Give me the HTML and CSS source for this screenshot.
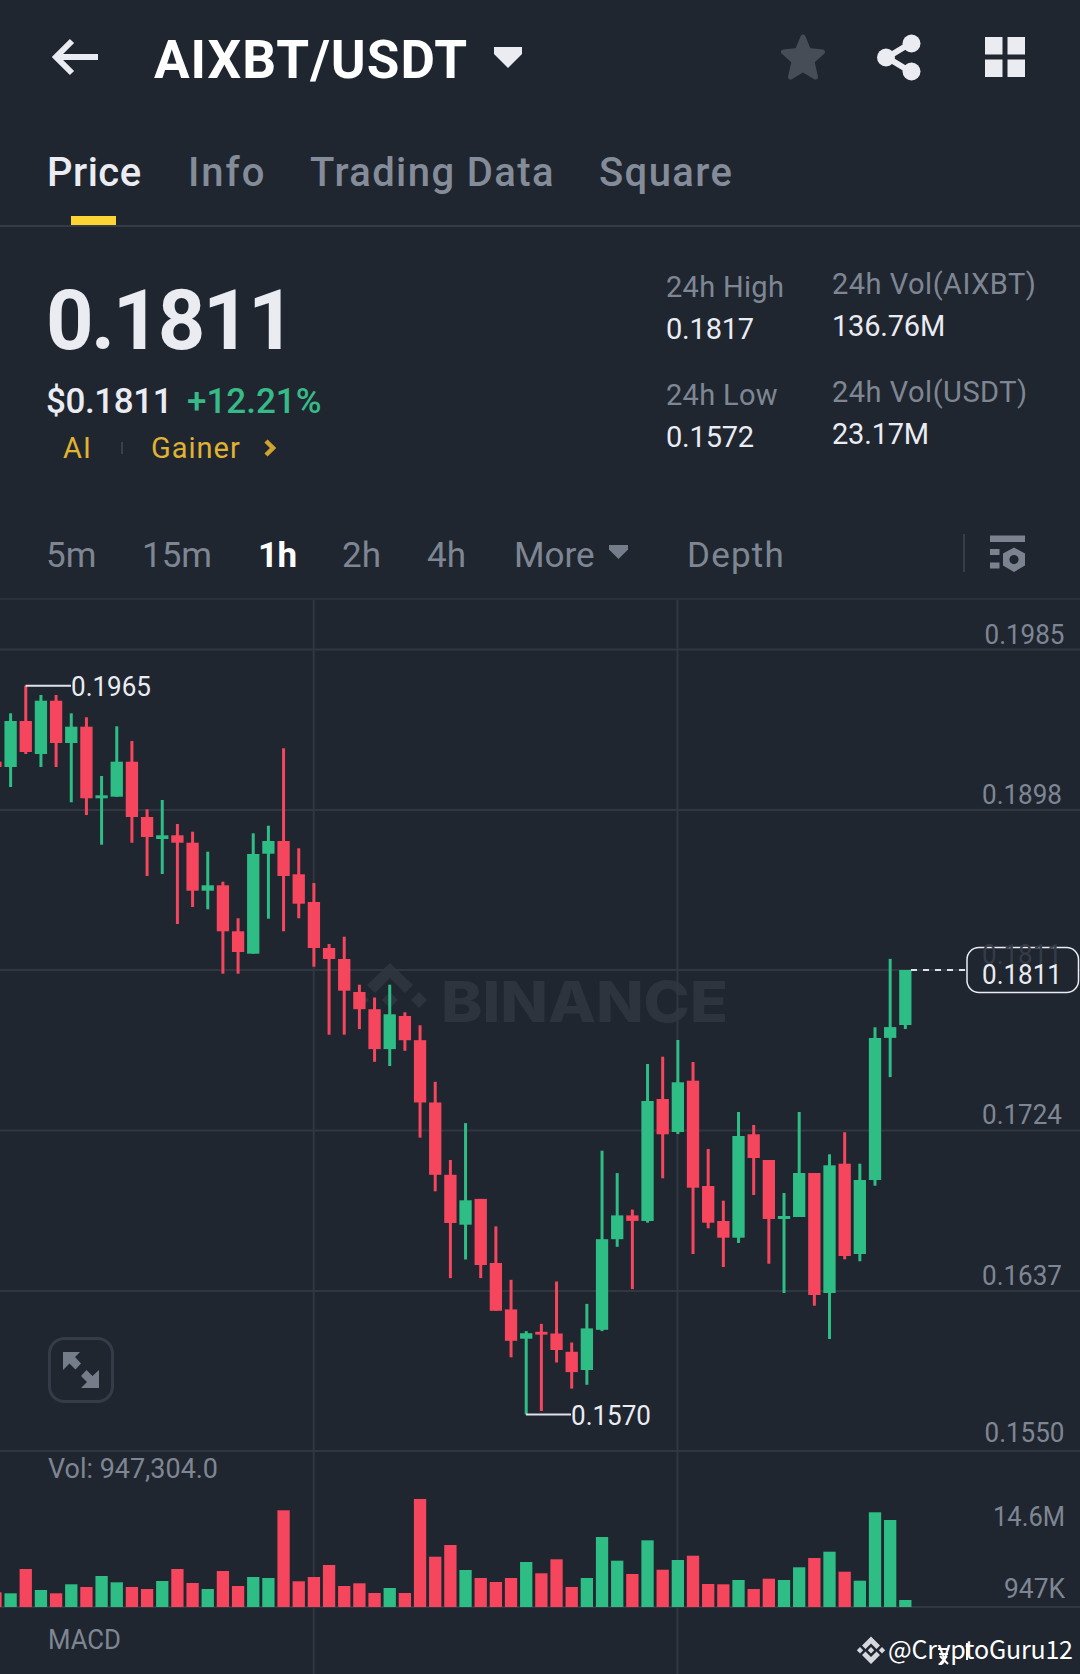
FILE: index.html
```html
<!DOCTYPE html>
<html lang="en">
<head>
    <meta charset="UTF-8">
    <title>AIXBT/USDT</title>
    <meta name="viewport" content="width=device-width, initial-scale=1.0">
    <link rel="stylesheet" href="styles.css">
</head>
<body>
    <header class="header">
        <svg class="back" width="48" height="38" viewBox="0 0 48 38">
            <path d="M3 19H46M20 3L4 19L20 35" fill="none" stroke="#eaecf2" stroke-width="6"/>
        </svg>
        <h1>AIXBT/USDT</h1>
        <svg class="caret" width="28" height="21" viewBox="0 0 28 21">
            <path d="M0 0H28V7L14 21L0 7Z" fill="#eaecf2"/>
        </svg>
        <div class="actions">
            <svg width="46" height="46" viewBox="0 0 46 46">
                <path d="M23 3L28.5 16.5L42.500 18L32 27.500L35.500 43L23 35.500L10.500 43L14 27.500L3.500 18L17.500 16.500Z" fill="#474d57" stroke="#474d57" stroke-width="5" stroke-linejoin="round"/>
            </svg>
            <svg width="44" height="47" viewBox="0 0 44 47">
                <path d="M34 9L10 23.500L34 38" fill="none" stroke="#eaecf2" stroke-width="6"/>
                <circle cx="34.500" cy="9.500" r="9" fill="#eaecf2"/>
                <circle cx="9" cy="23.500" r="9" fill="#eaecf2"/>
                <circle cx="34.500" cy="37.500" r="9" fill="#eaecf2"/>
            </svg>
            <svg width="40" height="40" viewBox="0 0 40 40">
                <path d="M0 0H17.500V17.500H0ZM22.500 0H40V17.500H22.500ZM0 22.500H17.500V40H0ZM22.500 22.500H40V40H22.500Z" fill="#eaecf2"/>
            </svg>
        </div>
    </header>

    <nav class="tabs">
        <a class="tab active">Price</a>
        <a class="tab info">Info</a>
        <a class="tab">Trading Data</a>
        <a class="tab">Square</a>
    </nav>

    <section class="ticker">
        <div class="quote">
            <div class="price">0.1811</div>
            <div class="change"><span class="usd">$0.1811</span><span class="up">+12.21%</span></div>
            <div class="tags">
                <span class="ai">AI</span>
                <span class="sep"></span>
                <span class="gainer">Gainer</span>
                <svg width="12" height="18" viewBox="0 0 12 18">
                    <path d="M2 2L9 9L2 16" fill="none" stroke="#d0a32e" stroke-width="4.500"/>
                </svg>
            </div>
        </div>
        <dl class="stats">
            <dt>24h High</dt>
            <dd>0.1817</dd>
            <dt>24h Low</dt>
            <dd>0.1572</dd>
        </dl>
        <dl class="stats volume">
            <dt>24h Vol(AIXBT)</dt>
            <dd>136.76M</dd>
            <dt>24h Vol(USDT)</dt>
            <dd>23.17M</dd>
        </dl>
    </section>

    <nav class="intervals">
        <span>5m</span>
        <span>15m</span>
        <span class="active">1h</span>
        <span>2h</span>
        <span>4h</span>
        <span class="more">More</span>
        <svg class="small-caret" width="19" height="14" viewBox="0 0 19 14">
            <path d="M0 0H19V4.500L9.500 14L0 4.500Z" fill="#767d8a"/>
        </svg>
        <span class="depth">Depth</span>
        <i class="divider"></i>
        <svg class="settings" width="35" height="37" viewBox="0 0 35 37">
            <path d="M0 0.500H35V7H0ZM0 14H9.500V20H0ZM0 27.500H9.500V33.500H0Z" fill="#7b8290"/>
            <path fill-rule="evenodd" d="M24 12.500L35 18.500V30.500L24 37L13 30.500V18.500ZM24 20A4.600 4.600 0 1 0 24 29.200A4.600 4.600 0 1 0 24 20Z" fill="#7b8290"/>
        </svg>
    </nav>

    <svg class="chart" width="1080" height="1074" viewBox="0 600 1080 1074">
        <g class="watermark">
            <path d="M390 963L413 985L405 993L390 978L375 993L367 985Z"/>
            <path d="M390 992L398 1000L390 1008L382 1000ZM419 992L427 1000L419 1008L411 1000ZM361 992L369 1000L361 1008L353 1000Z"/>
            <text x="441" y="1021.500" textLength="287" lengthAdjust="spacingAndGlyphs">BINANCE</text>
        </g>

        <path class="grid" d="M0 649.500H1080M0 810H1080M0 970H1080M0 1130.500H1080M0 1291H1080M0 1451H1080M0 1607H1080M313.700 600V1674M677.500 600V1674"/>

        <g id="candles"></g>
        <g id="volumes"></g>

        <path class="marker" d="M25.500 685.800H71M526 1414.500H571"/>
        <text class="value" x="71" y="695.500" textLength="80" lengthAdjust="spacingAndGlyphs">0.1965</text>
        <text class="value" x="571" y="1425" textLength="80" lengthAdjust="spacingAndGlyphs">0.1570</text>

        <g class="axis">
            <text x="984.500" y="643.500" textLength="80" lengthAdjust="spacingAndGlyphs">0.1985</text>
            <text x="982" y="803.500" textLength="80" lengthAdjust="spacingAndGlyphs">0.1898</text>
            <text x="982" y="1123.500" textLength="80" lengthAdjust="spacingAndGlyphs">0.1724</text>
            <text x="982" y="1284.500" textLength="80" lengthAdjust="spacingAndGlyphs">0.1637</text>
            <text x="984.500" y="1442" textLength="80" lengthAdjust="spacingAndGlyphs">0.1550</text>
            <text x="993" y="1526" textLength="72" lengthAdjust="spacingAndGlyphs">14.6M</text>
            <text x="1004" y="1598" textLength="61" lengthAdjust="spacingAndGlyphs">947K</text>
            <text x="48" y="1478" textLength="170" lengthAdjust="spacingAndGlyphs">Vol: 947,304.0</text>
            <text x="48" y="1648.500" textLength="73" lengthAdjust="spacingAndGlyphs">MACD</text>
        </g>

        <!-- current price -->
        <path class="last-line" d="M911 970H966"/>
        <rect class="pill" x="967" y="947.500" width="111.500" height="45" rx="12"/>
        <text class="faded" x="982" y="964" textLength="80" lengthAdjust="spacingAndGlyphs">0.1811</text>
        <text class="value" x="982" y="984" textLength="80" lengthAdjust="spacingAndGlyphs">0.1811</text>

        <!-- full screen button -->
        <rect class="expand" x="49.500" y="1338.500" width="63" height="63" rx="15"/>
        <path d="M63 1352H80L75 1357L81 1363.500L75.500 1369.500L69.500 1363.500L63 1370Z" fill="#767d8a"/>
        <path d="M99 1388H81L87 1382L81 1376L86.500 1370L92.500 1376L99 1370Z" fill="#767d8a"/>

        <g class="author">
            <path d="M871 1636.500L880 1645.500L876.500 1649L871 1643.500L865.500 1649L862 1645.500ZM871 1664L880 1655L876.500 1651.500L871 1657L865.500 1651.500L862 1655Z" fill="#d5d8dd"/>
            <path d="M871 1647L874.200 1650.200L871 1653.400L867.800 1650.200ZM860 1647L863.200 1650.200L860 1653.400L856.800 1650.200ZM882 1647L885.200 1650.200L882 1653.400L878.800 1650.200Z" fill="#d5d8dd"/>
            <text x="888" y="1659" textLength="185">@CryptoGuru12</text>
            <path d="M967 1643V1660M938 1649H949M939 1654H948M940 1664L947 1656M940 1656L948 1664" fill="none" stroke="#fff" stroke-width="2"/>
        </g>
    </svg>

    <script>
        const step = 15.165;
        const firstX = 10.6;
        const bodyWidth = 12.3;
        const volumeBase = 1607;

        // high, body top, body bottom, low, volume top, direction
        const data = [
            [761.7, 761.7, 767, 767, 1592.3, 'r'],
            [713.3, 721, 767, 787, 1593.3, 'g'],
            [685.7, 721, 752, 754, 1569, 'r'],
            [695, 700.7, 754, 767, 1590, 'g'],
            [695, 700.7, 743, 767, 1593.3, 'r'],
            [713.3, 726.7, 743, 802.3, 1584.3, 'g'],
            [717.3, 726.7, 798.3, 815, 1587, 'r'],
            [776, 795.3, 798.3, 844.7, 1576, 'g'],
            [726.3, 761.7, 796.7, 796.7, 1582.3, 'g'],
            [741, 761.7, 817, 842.7, 1587, 'r'],
            [809.3, 817, 837, 876, 1589, 'r'],
            [800, 835.3, 839, 874, 1581, 'g'],
            [824, 835.3, 842.7, 924, 1569, 'r'],
            [831.7, 842.7, 890.7, 907, 1583, 'r'],
            [851.7, 885.3, 890.7, 909.3, 1589, 'g'],
            [881.7, 885.3, 931.3, 973.7, 1571, 'r'],
            [918.3, 931.3, 952, 973.7, 1586, 'r'],
            [833.3, 854, 953.7, 953.7, 1577, 'g'],
            [825.7, 841, 853.7, 918.7, 1578, 'g'],
            [748.3, 841, 876, 931.3, 1510.3, 'r'],
            [848.3, 874.3, 903.7, 918.3, 1581.3, 'r'],
            [883, 902, 948, 966.7, 1577, 'r'],
            [944, 948, 959, 1034.7, 1565, 'r'],
            [936.7, 959, 990.7, 1034.7, 1586, 'r'],
            [984.7, 992, 1009.2, 1029.1, 1583.3, 'r'],
            [997.5, 1009.2, 1049.1, 1061.8, 1593, 'r'],
            [984.7, 1014.3, 1049.1, 1066, 1588, 'g'],
            [1012.3, 1016, 1040.2, 1050.8, 1593, 'r'],
            [1025.3, 1040.2, 1102.5, 1137.6, 1499, 'r'],
            [1081.8, 1102.5, 1174.8, 1191.3, 1556.7, 'r'],
            [1160, 1174.8, 1223, 1278.1, 1545, 'r'],
            [1123.1, 1200.3, 1224.7, 1259.5, 1570, 'g'],
            [1198.9, 1198.9, 1265, 1278.1, 1578, 'r'],
            [1226.4, 1263, 1310.8, 1310.8, 1582, 'r'],
            [1279.8, 1309.4, 1340.8, 1357.3, 1578, 'r'],
            [1331.1, 1333.2, 1338.7, 1414.5, 1562, 'g'],
            [1323.9, 1331.8, 1334.6, 1411, 1573.3, 'r'],
            [1281.5, 1333.5, 1350, 1362.5, 1559.3, 'r'],
            [1342.5, 1351.8, 1372.1, 1388.6, 1587, 'r'],
            [1303.9, 1328.4, 1370, 1384.8, 1578, 'g'],
            [1150.7, 1239.2, 1329.8, 1331.1, 1537, 'g'],
            [1173.1, 1215.4, 1239.2, 1246.8, 1560.7, 'g'],
            [1209.6, 1215.4, 1220.9, 1289.1, 1574, 'r'],
            [1064, 1101, 1221, 1222.7, 1540.3, 'g'],
            [1056.7, 1099, 1134.3, 1178.3, 1569.7, 'r'],
            [1040, 1082.3, 1132, 1134, 1560, 'g'],
            [1062, 1080.7, 1187.7, 1254, 1555.7, 'r'],
            [1149, 1186, 1222.7, 1228.3, 1584, 'r'],
            [1200.7, 1221, 1237.7, 1267, 1584.3, 'r'],
            [1112, 1136, 1237.7, 1243, 1580, 'g'],
            [1125, 1134.3, 1158, 1195, 1589, 'r'],
            [1160, 1160, 1219, 1263.7, 1578.7, 'r'],
            [1193, 1216, 1219, 1293, 1580, 'g'],
            [1112, 1173, 1217, 1217, 1567.3, 'g'],
            [1173, 1173, 1295, 1305.7, 1558, 'r'],
            [1154.3, 1165.3, 1293, 1339, 1551.7, 'g'],
            [1132.3, 1163.7, 1256, 1259.3, 1571.7, 'r'],
            [1163.7, 1180, 1254, 1261.3, 1580.7, 'g'],
            [1027.3, 1038, 1180, 1185.7, 1512.3, 'g'],
            [958.9, 1027.1, 1037.9, 1077.1, 1520, 'g'],
            [970, 970, 1025, 1029, 1600, 'g']
        ];

        function addRect(parent, x, top, width, bottom, dir) {
            const rect = document.createElementNS('http://www.w3.org/2000/svg', 'rect');
            rect.setAttribute('x', x);
            rect.setAttribute('y', top);
            rect.setAttribute('width', width);
            rect.setAttribute('height', bottom - top);
            rect.setAttribute('class', dir === 'g' ? 'rise' : 'fall');
            parent.appendChild(rect);
        }

        const candles = document.getElementById('candles');
        const volumes = document.getElementById('volumes');

        data.forEach(function([high, top, bottom, low, vol, dir], i) {
            // the first candle is cut off by the left edge
            const x = firstX + (i - 1) * step;
            addRect(candles, x - 1.5, high, 3, low, dir);
            addRect(candles, x - bodyWidth / 2, top, bodyWidth, bottom, dir);
            addRect(volumes, x - bodyWidth / 2, vol, bodyWidth, volumeBase, dir);
        });
    </script>
</body>
</html>
```

FILE: styles.css
```css
* {
    box-sizing: border-box;
}
body {
    margin: 0;
    width: 1080px;
    height: 1674px;
    overflow: hidden;
    background-color: #1f2630;
    color: #eaecf2;
    font-family: Roboto, "Liberation Sans", sans-serif;
}
svg {
    display: block;
    flex-shrink: 0;
}
.header {
    display: flex;
    align-items: center;
    height: 114px;
    padding: 0 55px 0 52px;
}
h1 {
    margin: 6px 0 0 54px;
    width: 340px;
    font-size: 53px;
    line-height: 60px;
    font-weight: 700;
    letter-spacing: 1px;
    color: #fff;
}
.actions {
    display: flex;
    align-items: center;
    margin-left: auto;
}
.actions svg:nth-child(2) {
    margin: 0 64px 0 51px;
}
.tabs {
    display: grid;
    grid-template-columns: 141px 122px 289px 200px;
    height: 113px;
    padding: 29px 0 0 47px;
    border-bottom: 2px solid #343b47;
}
.tab {
    position: relative;
    font-size: 40px;
    line-height: 60px;
    font-weight: 500;
    letter-spacing: 1.4px;
    color: #858c99;
    white-space: nowrap;
}
.tab.active {
    color: #eaecf2;
    letter-spacing: 0.5px;
}
.tab.info {
    letter-spacing: 2px;
}
.tab.active::after {
    content: "";
    position: absolute;
    left: 24px;
    top: 73px;
    width: 45px;
    height: 9px;
    background-color: #fcd535;
}
.ticker {
    display: grid;
    grid-template-columns: 620px 166px 1fr;
    height: 273px;
    padding-left: 46px;
}
.quote {
    padding-top: 52px;
}
.price {
    font-size: 83px;
    line-height: 84px;
    font-weight: 700;
    letter-spacing: -2.5px;
}
.change {
    display: flex;
    margin-top: 19px;
    font-size: 35px;
    line-height: 40px;
    font-weight: 500;
}
.usd {
    width: 141px;
    letter-spacing: -0.4px;
}
.up {
    color: #37ba87;
}
.tags {
    display: flex;
    align-items: center;
    margin-top: 8px;
    padding-left: 17px;
    font-size: 29px;
    line-height: 36px;
    letter-spacing: 1px;
    color: #e0b332;
}
.ai {
    width: 58px;
}
.sep {
    width: 2px;
    height: 12px;
    background-color: #38404b;
}
.gainer {
    width: 113px;
    margin-left: 28px;
}
.stats {
    margin: 0;
    padding-top: 39px;
    font-size: 29px;
    line-height: 42px;
    white-space: nowrap;
}
.stats.volume {
    padding-top: 36px;
}
.stats dt {
    color: #7f8693;
    letter-spacing: 0.3px;
}
.stats.volume dt {
    letter-spacing: 0.5px;
}
.stats dd {
    margin: 0 0 24px;
    letter-spacing: -0.2px;
}
.intervals {
    display: grid;
    grid-template-columns: 96px 116px 84px 85px 87px 93px 80px 276px 27px 35px;
    align-items: center;
    height: 100px;
    padding: 14px 0 0 46px;
    border-bottom: 2px solid #2a313c;
    font-size: 35px;
    line-height: 40px;
    color: #7f8693;
}
.intervals .active {
    font-weight: 700;
    letter-spacing: -0.5px;
    color: #fff;
}
.depth {
    letter-spacing: 1.2px;
}
.small-caret {
    margin: 0 0 8px 2px;
}
.divider {
    width: 2px;
    height: 38px;
    margin-bottom: 7px;
    background-color: #373e49;
}
.settings {
    margin-bottom: 5px;
}
.chart {
    font-size: 27px;
}
.grid {
    fill: none;
    stroke: #303741;
    stroke-width: 2;
}
.rise {
    fill: #2ebd85;
}
.fall {
    fill: #f6465d;
}
.watermark {
    fill: #2d343e;
    font-family: Inter, sans-serif;
    font-size: 57px;
    font-weight: 800;
}
.marker {
    stroke: #dfe2e8;
    stroke-width: 2;
}
.value {
    fill: #eaecf2;
}
.axis {
    fill: #7f8693;
}
.faded {
    fill: #353c47;
}
.last-line {
    stroke: #dfe2e8;
    stroke-width: 2;
    stroke-dasharray: 6 6;
}
.pill {
    fill: #1f2630;
    stroke: #eaecf2;
    stroke-width: 1.5;
}
.expand {
    fill: none;
    stroke: #353c47;
    stroke-width: 3;
}
.author {
    fill: #fff;
    font-family: "Noto Sans CJK SC", "Noto Sans", sans-serif;
    font-size: 25px;
}
```
